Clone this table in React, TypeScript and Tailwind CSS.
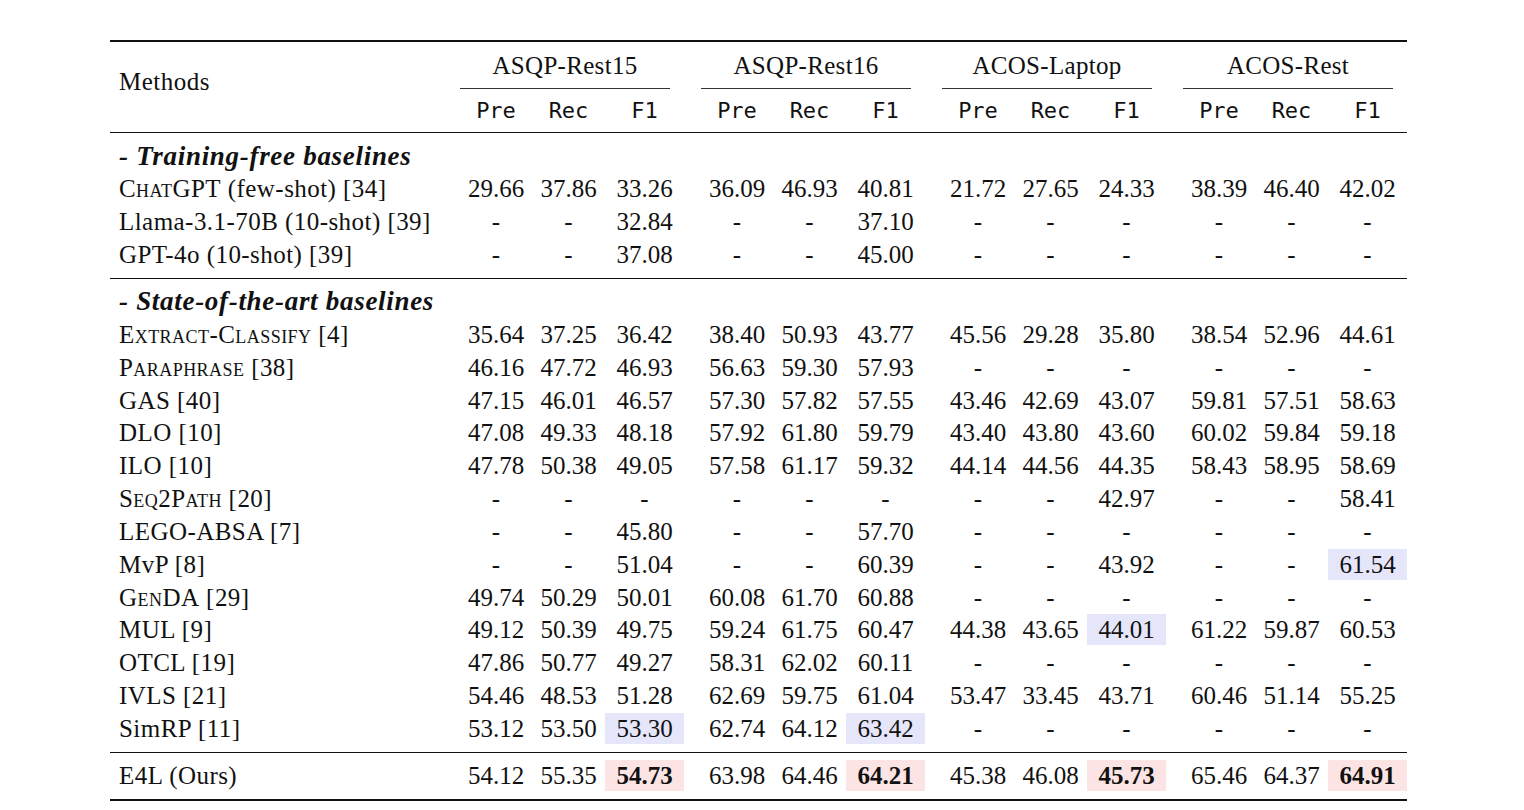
import React from "react";

type Cell = { v: string; hl?: "blue" | "pink"; bold?: boolean };

interface Row {
  name: string;
  sc?: boolean;
  cells: Cell[];
}

const c = (s: string): Cell[] =>
  s.split(" ").map((v) => ({ v }));

const trainingFree: Row[] = [
  { name: "ChatGPT", sc: true, cells: c("29.66 37.86 33.26 36.09 46.93 40.81 21.72 27.65 24.33 38.39 46.40 42.02") },
  { name: "Llama-3.1-70B (10-shot) [39]", cells: c("- - 32.84 - - 37.10 - - - - - -") },
  { name: "GPT-4o (10-shot) [39]", cells: c("- - 37.08 - - 45.00 - - - - - -") },
];

const withHl = (cells: Cell[], idx: number, hl: "blue" | "pink", bold = false) => {
  const next = [...cells];
  next[idx] = { ...next[idx], hl, bold };
  return next;
};

const sota: Row[] = [
  { name: "Extract-Classify", sc: true, cells: c("35.64 37.25 36.42 38.40 50.93 43.77 45.56 29.28 35.80 38.54 52.96 44.61") },
  { name: "Paraphrase", sc: true, cells: c("46.16 47.72 46.93 56.63 59.30 57.93 - - - - - -") },
  { name: "GAS [40]", cells: c("47.15 46.01 46.57 57.30 57.82 57.55 43.46 42.69 43.07 59.81 57.51 58.63") },
  { name: "DLO [10]", cells: c("47.08 49.33 48.18 57.92 61.80 59.79 43.40 43.80 43.60 60.02 59.84 59.18") },
  { name: "ILO [10]", cells: c("47.78 50.38 49.05 57.58 61.17 59.32 44.14 44.56 44.35 58.43 58.95 58.69") },
  { name: "Seq2Path", sc: true, cells: c("- - - - - - - - 42.97 - - 58.41") },
  { name: "LEGO-ABSA [7]", cells: c("- - 45.80 - - 57.70 - - - - - -") },
  { name: "MvP [8]", cells: withHl(c("- - 51.04 - - 60.39 - - 43.92 - - 61.54"), 11, "blue") },
  { name: "GenDA", sc: true, cells: c("49.74 50.29 50.01 60.08 61.70 60.88 - - - - - -") },
  { name: "MUL [9]", cells: withHl(c("49.12 50.39 49.75 59.24 61.75 60.47 44.38 43.65 44.01 61.22 59.87 60.53"), 8, "blue") },
  { name: "OTCL [19]", cells: c("47.86 50.77 49.27 58.31 62.02 60.11 - - - - - -") },
  { name: "IVLS [21]", cells: c("54.46 48.53 51.28 62.69 59.75 61.04 53.47 33.45 43.71 60.46 51.14 55.25") },
  { name: "SimRP [11]", cells: withHl(withHl(c("53.12 53.50 53.30 62.74 64.12 63.42 - - - - - -"), 2, "blue"), 5, "blue") },
];

const scRefs: Record<string, string> = {
  ChatGPT: " (few-shot) [34]",
  "Extract-Classify": " [4]",
  Paraphrase: " [38]",
  Seq2Path: " [20]",
  GenDA: " [29]",
};

let ours = c("54.12 55.35 54.73 63.98 64.46 64.21 45.38 46.08 45.73 65.46 64.37 64.91");
[2, 5, 8, 11].forEach((i) => (ours = withHl(ours, i, "pink", true)));

const groups = ["ASQP-Rest15", "ASQP-Rest16", "ACOS-Laptop", "ACOS-Rest"];
const colW = ["w-[72px]", "w-[73px]", "w-[79px]"];

function NameCell({ row }: { row: Row }) {
  return (
    <div className="w-[350px] shrink-0 pl-[9px] whitespace-nowrap tracking-[0.45px]">
      {row.sc ? (
        <>
          <span className="[font-variant:small-caps]">{row.name}</span>
          {scRefs[row.name]}
        </>
      ) : (
        row.name
      )}
    </div>
  );
}

function DataCells({ cells }: { cells: Cell[] }) {
  return (
    <div className="flex h-full">
      {groups.map((g, gi) => (
        <div key={g} className={`flex h-full ${gi < 3 ? "mr-[17px]" : ""}`}>
          {cells.slice(gi * 3, gi * 3 + 3).map((cell, ci) => (
            <div key={ci} className={`${colW[ci]} h-full flex items-center justify-center py-[1px]`}>
              <div
                className={`w-full h-full flex items-center justify-center ${
                  cell.hl === "blue" ? "bg-[#e6e6fa]" : cell.hl === "pink" ? "bg-[#fde4e4]" : ""
                } ${cell.bold ? "font-bold" : ""}`}
              >
                {cell.v}
              </div>
            </div>
          ))}
        </div>
      ))}
    </div>
  );
}

function DataRow({ row, h }: { row: Row; h: string }) {
  return (
    <div className={`flex items-center ${h}`}>
      <NameCell row={row} />
      <DataCells cells={row.cells} />
    </div>
  );
}

function SectionTitle({ children, pt }: { children: React.ReactNode; pt: string }) {
  return (
    <div className={`${pt} h-[39px] flex items-center pl-[9px] font-bold italic text-[27px] tracking-[0.7px]`}>
      {children}
    </div>
  );
}

export default function App() {
  return (
    <div className="w-[1524px] h-[810px] bg-white overflow-hidden text-[#111] font-['Liberation_Serif',serif] text-[25px] leading-none">
      <div className="ml-[110px] mt-[40px] w-[1297px]">
        <div className="border-t-2 border-[#111]" />
        {/* header */}
        <div className="flex">
          <div className="w-[350px] shrink-0 pl-[9px] flex items-center pb-[12px] tracking-[0.5px]">Methods</div>
          <div className="flex">
            {groups.map((g, gi) => (
              <div key={g} className={`w-[224px] ${gi < 3 ? "mr-[17px]" : ""}`}>
                <div className="h-[46px] w-[210px] flex items-center justify-center tracking-[0.3px]">{g}</div>
                <div className="w-[210px] border-t border-[#333]" />
                <div className="h-[43px] flex items-center font-['DejaVu_Sans_Mono',monospace] text-[22px]">
                  {["Pre", "Rec", "F1"].map((s, i) => (
                    <div key={s} className={`${colW[i]} text-center`}>
                      {s}
                    </div>
                  ))}
                </div>
              </div>
            ))}
          </div>
        </div>
        <div className="border-t-[1.3px] border-[#111]" />

        {/* training-free */}
        <SectionTitle pt="pt-[7px]">- Training-free baselines</SectionTitle>
        {trainingFree.map((r) => (
          <DataRow key={r.name} row={r} h="h-[33px]" />
        ))}
        <div className="h-[7px]" />
        <div className="border-t border-[#111]" />

        {/* state of the art */}
        <SectionTitle pt="pt-[6px]">- State-of-the-art baselines</SectionTitle>
        {sota.map((r) => (
          <DataRow key={r.name} row={r} h="h-[32.83px]" />
        ))}
        <div className="h-[7px]" />
        <div className="border-t border-[#111]" />
        <div className="h-[6px]" />
        <DataRow row={{ name: "E4L (Ours)", cells: ours }} h="h-[33px]" />
        <div className="h-[7px]" />
        <div className="border-t-2 border-[#111]" />
      </div>
    </div>
  );
}
